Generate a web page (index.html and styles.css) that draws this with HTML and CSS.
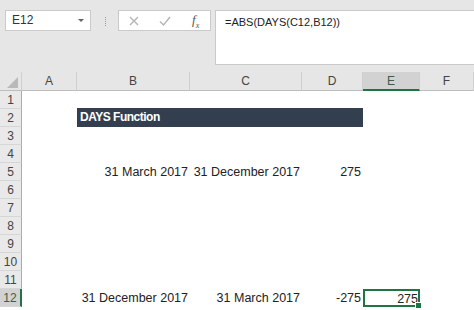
FILE: index.html
```html
<html lang="en">
<head>
    <meta charset="UTF-8">
    <title>DAYS Function</title>
    <link rel="stylesheet" href="styles.css">
</head>
<body>
<div class="toolbar">
    <div class="namebox">E12<span class="drop"></span></div>
    <div class="grip"></div>
    <div class="iconbox">
        <svg class="ico" width="12" height="12" viewBox="0 0 12 12"><path d="M2 2 L10 10 M10 2 L2 10" stroke="#b4b4b4" stroke-width="1.4" fill="none"/></svg>
        <svg class="ico" width="14" height="12" viewBox="0 0 14 12"><path d="M2 6.5 L5.5 10 L12 2" stroke="#b4b4b4" stroke-width="1.4" fill="none"/></svg>
        <span class="fx">f<sub>x</sub></span>
    </div>
    <div class="formula">=ABS(DAYS(C12,B12))</div>
</div>

<div class="sheet">
    <div class="corner"><span class="tri"></span></div>
    <div class="colhead">A</div>
    <div class="colhead">B</div>
    <div class="colhead">C</div>
    <div class="colhead">D</div>
    <div class="colhead active">E</div>
    <div class="colhead">F</div>

    <div class="rowhead">1</div>
    <div class="cell"></div><div class="cell"></div><div class="cell"></div><div class="cell"></div><div class="cell"></div><div class="cell"></div>

    <div class="rowhead">2</div>
    <div class="cell"></div>
    <div class="cell title">DAYS Function</div>
    <div class="cell"></div><div class="cell"></div>

    <div class="rowhead">3</div>
    <div class="cell"></div><div class="cell"></div><div class="cell"></div><div class="cell"></div><div class="cell"></div><div class="cell"></div>

    <div class="rowhead">4</div>
    <div class="cell"></div><div class="cell"></div><div class="cell"></div><div class="cell"></div><div class="cell"></div><div class="cell"></div>

    <div class="rowhead">5</div>
    <div class="cell"></div>
    <div class="cell num">31 March 2017</div>
    <div class="cell num">31 December 2017</div>
    <div class="cell num">275</div>
    <div class="cell"></div><div class="cell"></div>

    <div class="rowhead">6</div>
    <div class="cell"></div><div class="cell"></div><div class="cell"></div><div class="cell"></div><div class="cell"></div><div class="cell"></div>

    <div class="rowhead">7</div>
    <div class="cell"></div><div class="cell"></div><div class="cell"></div><div class="cell"></div><div class="cell"></div><div class="cell"></div>

    <div class="rowhead">8</div>
    <div class="cell"></div><div class="cell"></div><div class="cell"></div><div class="cell"></div><div class="cell"></div><div class="cell"></div>

    <div class="rowhead">9</div>
    <div class="cell"></div><div class="cell"></div><div class="cell"></div><div class="cell"></div><div class="cell"></div><div class="cell"></div>

    <div class="rowhead">10</div>
    <div class="cell"></div><div class="cell"></div><div class="cell"></div><div class="cell"></div><div class="cell"></div><div class="cell"></div>

    <div class="rowhead">11</div>
    <div class="cell"></div><div class="cell"></div><div class="cell"></div><div class="cell"></div><div class="cell"></div><div class="cell"></div>

    <div class="rowhead active">12</div>
    <div class="cell"></div>
    <div class="cell num">31 December 2017</div>
    <div class="cell num">31 March 2017</div>
    <div class="cell num">-275</div>
    <div class="cell num selected">275</div>
    <div class="cell"></div>
</div>
</body>
</html>
```

FILE: styles.css
```css
body {
    margin: 0;
    overflow: hidden;
    font-family: "Liberation Sans", Arial, sans-serif;
    background: white;
}

.toolbar {
    height: 72px;
    box-sizing: border-box;
    background: #e6e6e6;
    display: flex;
    align-items: flex-start;
    padding: 10px 0 0 5px;
}

.namebox {
    width: 86px;
    height: 21px;
    box-sizing: border-box;
    background: white;
    border: 1px solid #cacaca;
    font-size: 12px;
    color: #333;
    padding-left: 6px;
    line-height: 19px;
    position: relative;
}

.drop {
    position: absolute;
    right: 6px;
    top: 8px;
    border-left: 3px solid transparent;
    border-right: 3px solid transparent;
    border-top: 3px solid #666;
}

.grip {
    width: 0;
    height: 9px;
    margin: 7px 0 0 14px;
    border-left: 1px dotted #9a9a9a;
}

.iconbox {
    width: 93px;
    height: 21px;
    box-sizing: border-box;
    margin-left: 12px;
    background: white;
    border: 1px solid #cacaca;
    display: flex;
    align-items: center;
    padding-left: 9px;
    gap: 18px;
}

.fx {
    font-family: "Liberation Serif", serif;
    font-style: italic;
    font-size: 13px;
    color: #555;
    margin-left: 2px;
}

.fx sub {
    font-size: 8px;
}

.formula {
    flex: 1;
    height: 55px;
    box-sizing: border-box;
    margin-left: 4px;
    background: white;
    border: 1px solid #cacaca;
    border-right: none;
    font-size: 11px;
    color: #222;
    padding: 5px 0 0 9px;
}

.sheet {
    display: grid;
    grid-template-columns: 22px 55px 113px 112px 61px 57px 54px;
    grid-template-rows: 19px;
    grid-auto-rows: 18px;
}

.corner {
    background: #e6e6e6;
    border-right: 1px solid #cfcfcf;
    border-bottom: 1px solid #bdbdbd;
    position: relative;
}

.tri {
    position: absolute;
    right: 3px;
    bottom: 2px;
    border-left: 11px solid transparent;
    border-bottom: 11px solid #b9b9b9;
}

.colhead {
    background: #e6e6e6;
    border-right: 1px solid #cfcfcf;
    border-bottom: 1px solid #bdbdbd;
    font-size: 12px;
    color: #444;
    text-align: center;
    line-height: 19px;
}

.colhead.active {
    background: #d2d2d2;
    border-bottom: 2px solid #217346;
    color: #3d5c4a;
}

.rowhead {
    background: #e9e9e9;
    border-right: 1px solid #ababab;
    border-bottom: 1px solid #d6d6d6;
    font-size: 12px;
    color: #444;
    text-align: center;
    line-height: 18px;
}

.rowhead.active {
    background: #d2d2d2;
    border-right: 2px solid #217346;
    color: #3d5c4a;
}

.cell {
    font-size: 12.5px;
    color: #222;
    line-height: 18px;
    white-space: nowrap;
}

.num {
    text-align: right;
    padding-right: 2px;
}

.title {
    grid-column: span 3;
    background: #333f4f;
    color: white;
    font-weight: bold;
    font-size: 12px;
    letter-spacing: -0.5px;
    padding-left: 3px;
    line-height: 19px;
    margin-top: -1px;
}

.selected {
    border: 2px solid #217346;
    line-height: 16px;
    padding-right: 0;
    position: relative;
}

.selected::after {
    content: "";
    position: absolute;
    right: -4px;
    bottom: -4px;
    width: 5px;
    height: 5px;
    background: #217346;
    border: 1px solid white;
}
```
